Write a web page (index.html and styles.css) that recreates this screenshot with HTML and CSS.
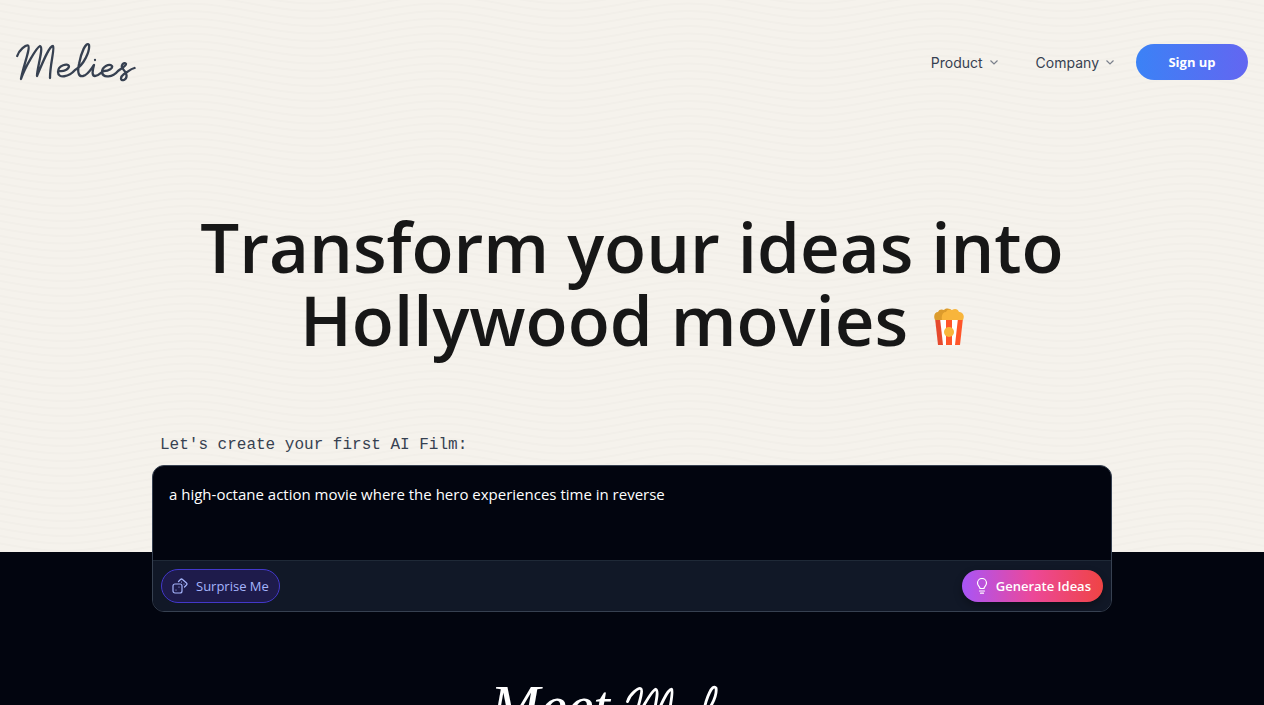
FILE: index.html
```html
<!DOCTYPE html>
<html lang="en">
<head>
<meta charset="utf-8">
<meta name="viewport" content="width=device-width, initial-scale=1">
<title>Melies</title>
<link rel="stylesheet" href="styles.css">
</head>
<body>
<svg class="defs" width="0" height="0" aria-hidden="true">
  <symbol id="wordmark" viewBox="0 0 120 40">
    <path fill="none" stroke="currentColor" stroke-width="2.3" stroke-linecap="round" stroke-linejoin="round" d="M1.200 14C3 8 10 2.500 12 3.500C15 5 7 25 5 37C9 25 21 5 24 4C28 5 21 26 21 34C26 22 33 4 37 4C39 6 34 22 34 36M43 29C48 30 53 27 53 24C52 21 42 23 42 30C42 37 53 35 59 28C68 23 74 9 73 3C70 -1 65 11 63 22C61 31 63 35 67 34C72 33 75 27 78 23C76 30 76 34 79 34C83 34 85 30 88 29C93 29 97 26 96 24C93 21 86 25 86 30C87 37 97 35 102 29C106 26 110 24 110 22C108 19 104 24 107 27C111 31 112 36 108 38C104 39 104 35 108 32C112 30 114 27 118.500 26M79 18L79 18"/>
  </symbol>
</svg>
<section class="hero">
  <svg class="waves" aria-hidden="true">
    <defs>
      <path id="swell" d="M0 3.500C45 3.500 80 -11.500 125 -11.500S205 3.500 250 3.500"/>
      <pattern id="wave" x="63" width="250" height="15" patternUnits="userSpaceOnUse">
        <g fill="none" stroke="#f2efe9" stroke-width="2">
          <use href="#swell"/>
          <use href="#swell" y="7.500"/>
          <use href="#swell" y="15"/>
          <use href="#swell" y="22.500"/>
          <use href="#swell" y="30"/>
        </g>
      </pattern>
    </defs>
    <rect width="100%" height="100%" fill="url(#wave)"/>
  </svg>
  <header class="topbar">
    <a class="logo" href="#" aria-label="Melies"><svg aria-hidden="true"><use href="#wordmark"/></svg></a>
    <nav class="nav">
      <button class="nav-item" type="button">Product <svg class="chevron" viewBox="0 0 8 8" aria-hidden="true"><path d="M.5 2.500L4 6l3.500-3.500"/></svg></button>
      <button class="nav-item" type="button">Company <svg class="chevron" viewBox="0 0 8 8" aria-hidden="true"><path d="M.5 2.500L4 6l3.500-3.500"/></svg></button>
      <a class="signup" href="#">Sign up</a>
    </nav>
  </header>
  <h1 class="title">Transform your ideas into<br>Hollywood movies
    <svg class="popcorn" viewBox="0 0 30 38" role="img" aria-label="Popcorn">
      <path fill="#fff" d="M2 10h26l-3 27H5z"/>
      <path fill="#e64a2e" d="M1 10h5l3 27H4z"/>
      <path fill="#ff5529" d="M12 10h6v27h-6zM24 10h5l-3 27h-5z"/>
      <path fill="#dc9b2c" d="M1 12C-1 8 1 4 4 4C5 1 8 1 10 2C12 0 16 0 18 3L12 12z"/>
      <path fill="#f8b53b" d="M8 12C7 7 9 4 12 4C13 1 16 1 18 2C21 0 24 1 25 4C29 4 31 8 29 12z"/>
      <circle cx="15" cy="24" r="5" fill="#f8b53b"/>
    </svg>
  </h1>
</section>
<main class="main">
  <form class="composer">
    <label class="prompt-label" for="idea">Let's create your first AI Film:</label>
    <div class="panel">
      <textarea class="idea" id="idea" rows="2">a high-octane action movie where the hero experiences time in reverse</textarea>
      <div class="actions">
        <button class="surprise" type="button">
          <svg class="icon" viewBox="0 0 16 16" aria-hidden="true"><rect x="1" y="6" width="9" height="9" rx="2"/><path d="M6.500 3.500L8.500 1.500Q9.500 .5 10.500 1.500L14.500 5Q15.500 6 14.500 7L12.500 9M4 12h.01M7 9h.01M9.500 4h.01M12 6h.01"/></svg>
          Surprise Me
        </button>
        <button class="generate" type="submit">
          <svg class="icon" viewBox="0 0 16 16" aria-hidden="true"><path d="M6 10.500C6 8.500 3.500 8 3.500 5a4.500 4.500 0 0 1 9 0C12.500 8 10 8.500 10 10.500zM5.500 13h5M6.500 15.200h3"/></svg>
          Generate Ideas
        </button>
      </div>
    </div>
  </form>
  <h2 class="meet">Meet <svg role="img" aria-label="Melies"><use href="#wordmark"/></svg></h2>
</main>
</body>
</html>
```
FILE: styles.css
```css
* { box-sizing: border-box; }
html { background: #02050f; scrollbar-width: none; }
body {
  margin: 0;
  color: #171717;
  font-family: "Segoe UI", "Open Sans", "Noto Sans", sans-serif;
}
button, textarea { font: inherit; }
button { cursor: pointer; }
.defs, .waves { position: absolute; }
.hero {
  position: relative;
  padding: 40px 16px 196px;
  background: #f5f2ec;
}
.waves { inset: 0; width: 100%; height: 100%; }
.topbar {
  position: relative;
  display: flex;
  align-items: center;
  justify-content: space-between;
  height: 44px;
}
.logo { display: block; color: #374151; }
.logo svg { display: block; width: 120px; height: 40px; }
.nav { display: flex; align-items: center; }
.nav-item {
  display: flex;
  align-items: center;
  gap: 7px;
  margin-right: 38px;
  padding: 0;
  border: 0;
  background: none;
  color: #374151;
  font-family: Inter, sans-serif;
  font-size: 14px;
}
.nav-item:nth-child(2) { margin-right: 22px; }
.chevron { width: 8px; height: 8px; fill: none; stroke: #7b818c; stroke-width: 1.2; }
.signup {
  width: 112px;
  height: 36px;
  border-radius: 18px;
  background: linear-gradient(to right, #3b82f6, #6366f1);
  color: #fff;
  font-size: 13px;
  font-weight: 700;
  line-height: 36px;
  text-align: center;
  text-decoration: none;
}
.title {
  position: relative;
  margin: 126px 0 0;
  font-size: 69px;
  font-weight: 600;
  line-height: 73px;
  text-align: center;
}
.popcorn { width: 30px; height: 38px; margin-left: 8px; }
.main { position: relative; padding: 0 16px; }
.composer { max-width: 960px; margin: -119px auto 0; }
.prompt-label {
  display: block;
  padding-left: 8px;
  color: #374151;
  font: 16px/24px "Courier New", "Liberation Mono", monospace;
}
.panel {
  margin-top: 8px;
  overflow: hidden;
  border: 1px solid #374151;
  border-radius: 12px;
  background: #02050f;
}
.idea {
  display: block;
  width: 100%;
  height: 94px;
  padding: 16px;
  border: 0;
  outline: 0;
  resize: none;
  background: transparent;
  color: #fff;
  font-size: 15px;
  font-weight: 500;
  line-height: 24px;
}
.actions {
  display: flex;
  align-items: center;
  justify-content: space-between;
  padding: 8px;
  border-top: 1px solid #1f2937;
  background: #111827;
}
.surprise, .generate {
  display: flex;
  align-items: center;
  gap: 8px;
  font-size: 13px;
}
.surprise {
  height: 34px;
  padding: 0 10px;
  border: 1px solid #4338ca;
  border-radius: 17px;
  background: #1e1b4b;
  color: #a5b4fc;
}
.generate {
  gap: 6px;
  height: 32px;
  padding: 0 12px;
  border: 0;
  border-radius: 16px;
  background: linear-gradient(to right, #a855f7, #ec4899, #ef4444);
  color: #fff;
  font-weight: 600;
  box-shadow: 0 4px 8px rgba(0, 0, 0, .3);
}
.icon { width: 16px; height: 16px; fill: none; stroke: currentColor; stroke-width: 1.2; stroke-linecap: round; stroke-linejoin: round; }
.meet {
  display: flex;
  justify-content: center;
  gap: 16px;
  margin: 72px 0 0;
  color: #fff;
  font-family: "Liberation Serif", serif;
  font-size: 60px;
  font-style: italic;
  font-weight: 400;
  line-height: 44px;
}
.meet svg { width: 148px; height: 50px; }
```
